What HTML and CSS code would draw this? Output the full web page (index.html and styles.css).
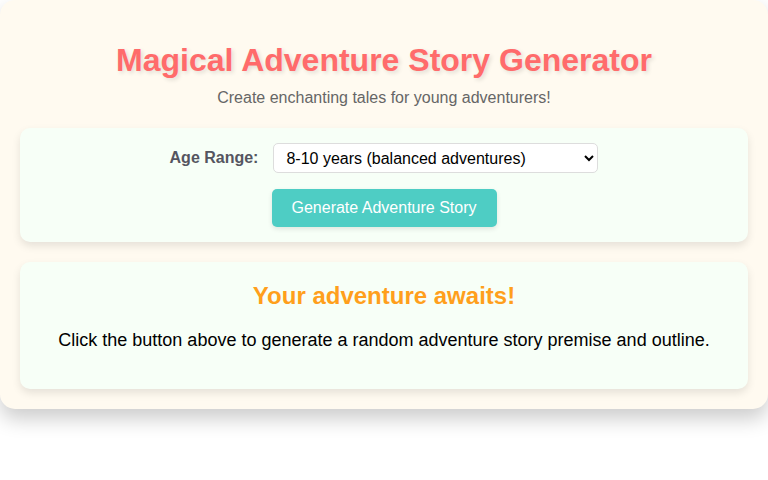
FILE: index.html
```html
<!DOCTYPE html>
<html lang="en">
<head>
<meta charset="utf-8">
<title>Magical Adventure Story Generator</title>
<link rel="stylesheet" href="styles.css">
</head>
<body>
<div class="page">
  <div class="container">
    <header class="header">
      <h1 class="title">Magical Adventure Story Generator</h1>
      <p class="subtitle">Create enchanting tales for young adventurers!</p>
    </header>
    <section class="card controls">
      <div class="row">
        <label class="label" for="age">Age Range:</label>
        <select class="select" id="age">
          <option>5-7 years (simple adventures)</option>
          <option selected>8-10 years (balanced adventures)</option>
          <option>11-13 years (complex adventures)</option>
        </select>
      </div>
      <button class="btn" type="button">Generate Adventure Story</button>
    </section>
    <section class="card output">
      <h2 class="out-title">Your adventure awaits!</h2>
      <p class="out-text">Click the button above to generate a random adventure story premise and outline.</p>
    </section>
  </div>
</div>
</body>
</html>
```
FILE: styles.css
```css
html, body {
  margin: 0;
  padding: 0;
  background: #ffffff;
}
body {
  font-family: "Liberation Sans", Arial, sans-serif;
  color: #222;
}
.page {
  min-height: 480px;
}
.container {
  background: #fffaf0;
  border-radius: 15px;
  padding: 20px;
  box-shadow: 0 10px 20px rgba(0, 0, 0, 0.2);
  display: flex;
  flex-direction: column;
  gap: 20px;
}
.header {
  text-align: center;
}
.title {
  margin: 22px 0 10px;
  font-size: 32px;
  line-height: 37px;
  font-weight: 700;
  color: #ff6b6b;
  text-shadow: 2px 2px 4px rgba(0, 0, 0, 0.12);
}
.subtitle {
  margin: 0 0 1px;
  font-size: 16px;
  line-height: 18px;
  color: #666666;
}
.card {
  background: #f7fff7;
  border-radius: 10px;
  box-shadow: 0 4px 8px rgba(0, 0, 0, 0.1);
}
.controls {
  padding: 15px;
  display: flex;
  flex-direction: column;
  align-items: center;
  gap: 16px;
}
.row {
  display: flex;
  align-items: center;
  gap: 15px;
}
.label {
  font-size: 16px;
  font-weight: 700;
  color: #555560;
}
.select {
  width: 325px;
  height: 30px;
  padding: 5px 8px;
  font-family: "Liberation Sans", Arial, sans-serif;
  font-size: 16px;
  color: #000;
  background: #ffffff;
  border: 1px solid #dddddd;
  border-radius: 5px;
}
.btn {
  background: #4ecdc4;
  color: #ffffff;
  border: none;
  border-radius: 5px;
  padding: 10px 20px;
  font-family: "Liberation Sans", Arial, sans-serif;
  font-size: 16px;
  line-height: 18px;
  box-shadow: 0 2px 5px rgba(0, 0, 0, 0.1);
}
.output {
  padding: 20px;
  text-align: center;
}
.out-title {
  margin: 0 0 20px;
  font-size: 24px;
  line-height: 28px;
  font-weight: 700;
  color: #ff9f1c;
}
.out-text {
  margin: 18px 0;
  font-size: 18px;
  line-height: 21px;
  color: #000;
}
```
